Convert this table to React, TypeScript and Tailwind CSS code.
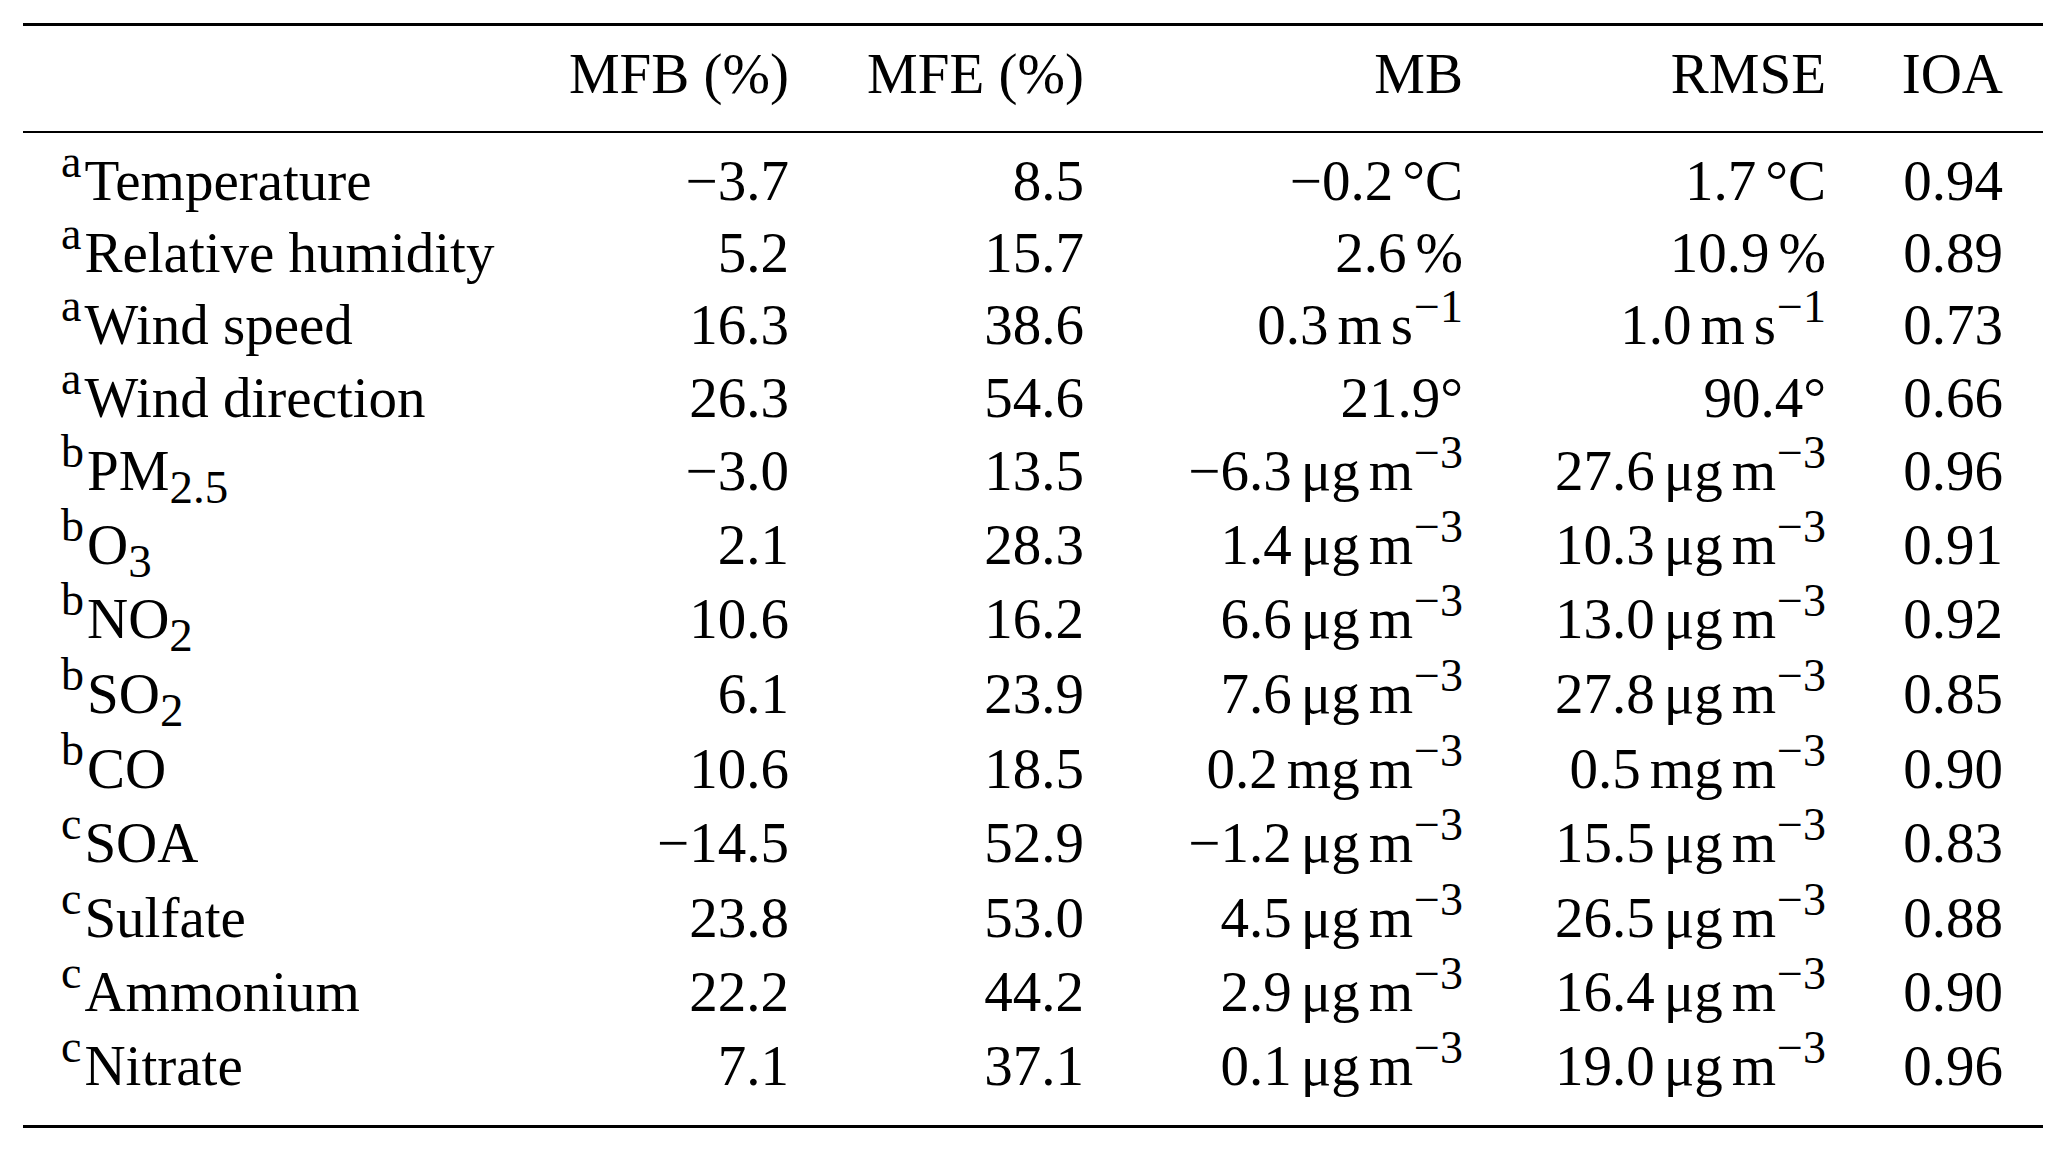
import type { ReactNode } from 'react'

type Row = {
  note: string
  label: ReactNode
  mfb: string
  mfe: string
  mb: ReactNode
  rmse: ReactNode
  ioa: string
  h: string
}

// unit part, set off by a thin space
function U({ children }: { children: ReactNode }) {
  return <span className="ml-[9px]">{children}</span>
}

function Sup({ children }: { children: ReactNode }) {
  return <span className="relative bottom-[22px] ml-[1px] text-[46px] leading-none">{children}</span>
}

function Sub({ children }: { children: ReactNode }) {
  return <span className="relative top-[13px] text-[47px] leading-none">{children}</span>
}

const ug = (v: string) => (
  <>
    {v}
    <U>μg</U>
    <U>m</U>
    <Sup>−3</Sup>
  </>
)

const mg = (v: string) => (
  <>
    {v}
    <U>mg</U>
    <U>m</U>
    <Sup>−3</Sup>
  </>
)

const ms = (v: string) => (
  <>
    {v}
    <U>m</U>
    <U>s</U>
    <Sup>−1</Sup>
  </>
)

const ROWS: Row[] = [
  { note: 'a', label: 'Temperature', mfb: '−3.7', mfe: '8.5', mb: <>−0.2<U>°C</U></>, rmse: <>1.7<U>°C</U></>, ioa: '0.94', h: 'h-[72px]' },
  { note: 'a', label: 'Relative humidity', mfb: '5.2', mfe: '15.7', mb: <>2.6<U>%</U></>, rmse: <>10.9<U>%</U></>, ioa: '0.89', h: 'h-[72px]' },
  { note: 'a', label: 'Wind speed', mfb: '16.3', mfe: '38.6', mb: ms('0.3'), rmse: ms('1.0'), ioa: '0.73', h: 'h-[73px]' },
  { note: 'a', label: 'Wind direction', mfb: '26.3', mfe: '54.6', mb: '21.9°', rmse: '90.4°', ioa: '0.66', h: 'h-[73px]' },
  { note: 'b', label: <>PM<Sub>2.5</Sub></>, mfb: '−3.0', mfe: '13.5', mb: ug('−6.3'), rmse: ug('27.6'), ioa: '0.96', h: 'h-[74px]' },
  { note: 'b', label: <>O<Sub>3</Sub></>, mfb: '2.1', mfe: '28.3', mb: ug('1.4'), rmse: ug('10.3'), ioa: '0.91', h: 'h-[74px]' },
  { note: 'b', label: <>NO<Sub>2</Sub></>, mfb: '10.6', mfe: '16.2', mb: ug('6.6'), rmse: ug('13.0'), ioa: '0.92', h: 'h-[75px]' },
  { note: 'b', label: <>SO<Sub>2</Sub></>, mfb: '6.1', mfe: '23.9', mb: ug('7.6'), rmse: ug('27.8'), ioa: '0.85', h: 'h-[75px]' },
  { note: 'b', label: 'CO', mfb: '10.6', mfe: '18.5', mb: mg('0.2'), rmse: mg('0.5'), ioa: '0.90', h: 'h-[74px]' },
  { note: 'c', label: 'SOA', mfb: '−14.5', mfe: '52.9', mb: ug('−1.2'), rmse: ug('15.5'), ioa: '0.83', h: 'h-[75px]' },
  { note: 'c', label: 'Sulfate', mfb: '23.8', mfe: '53.0', mb: ug('4.5'), rmse: ug('26.5'), ioa: '0.88', h: 'h-[74px]' },
  { note: 'c', label: 'Ammonium', mfb: '22.2', mfe: '44.2', mb: ug('2.9'), rmse: ug('16.4'), ioa: '0.90', h: 'h-[74px]' },
  { note: 'c', label: 'Nitrate', mfb: '7.1', mfe: '37.1', mb: ug('0.1'), rmse: ug('19.0'), ioa: '0.96', h: 'h-[72px]' },
]

const GRID = 'grid grid-cols-[440px_288px_295px_379px_363px_177px] pl-[38px] whitespace-nowrap'

export default function App() {
  return (
    <div className="min-h-screen w-full bg-white text-black font-['Liberation_Serif',serif] text-[57px] leading-[72px]">
      <div className="ml-[23px] w-[2020px] pt-[23px]">
        {/* top rule */}
        <div className="h-[3px] bg-black" />

        {/* header */}
        <div className={`${GRID} mt-[12px] h-[72px]`}>
          <div />
          <div className="text-right">MFB (%)</div>
          <div className="text-right">MFE (%)</div>
          <div className="text-right">MB</div>
          <div className="text-right">RMSE</div>
          <div className="text-right">IOA</div>
        </div>

        {/* mid rule */}
        <div className="mt-[21px] h-[2px] bg-black" />

        {/* body */}
        <div className="pt-[12px]">
          {ROWS.map((r, i) => (
            <div key={i} className={`${GRID} ${r.h}`}>
              <div>
                <span className="relative bottom-[23px] mr-[3px] text-[46px] leading-none">{r.note}</span>
                {r.label}
              </div>
              <div className="text-right">{r.mfb}</div>
              <div className="text-right">{r.mfe}</div>
              <div className="text-right">{r.mb}</div>
              <div className="text-right">{r.rmse}</div>
              <div className="text-right">{r.ioa}</div>
            </div>
          ))}
        </div>

        {/* bottom rule */}
        <div className="mt-[23px] h-[3px] bg-black" />
      </div>
    </div>
  )
}
